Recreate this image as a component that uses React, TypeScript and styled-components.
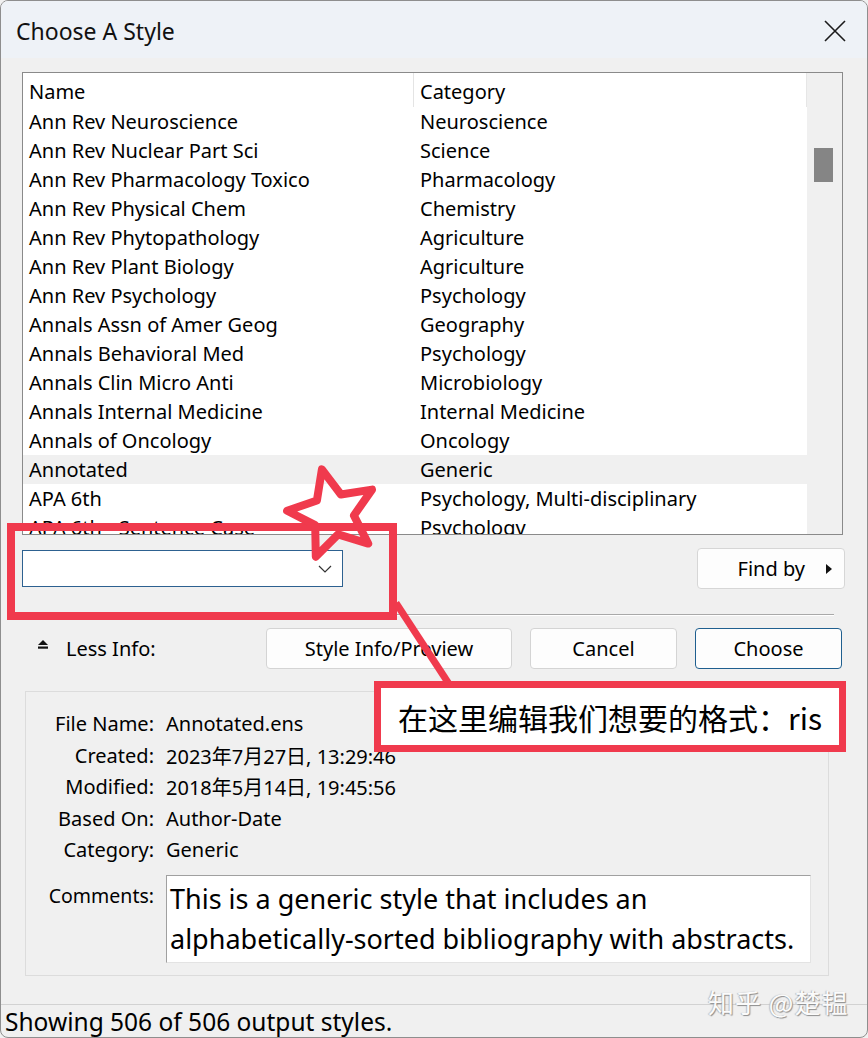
import styled, { createGlobalStyle } from "styled-components";

const GlobalStyle = createGlobalStyle`
    html, body {
        margin: 0;
        padding: 0;
        background: #f0f0f0;
    }

    body {
        font-family: "Noto Sans", "Noto Sans CJK SC", sans-serif;
        color: #000;
    }
`;

const styles: Array<{ name: string, category: string }> = [
    {name: "Ann Rev Neuroscience", category: "Neuroscience"},
    {name: "Ann Rev Nuclear Part Sci", category: "Science"},
    {name: "Ann Rev Pharmacology Toxico", category: "Pharmacology"},
    {name: "Ann Rev Physical Chem", category: "Chemistry"},
    {name: "Ann Rev Phytopathology", category: "Agriculture"},
    {name: "Ann Rev Plant Biology", category: "Agriculture"},
    {name: "Ann Rev Psychology", category: "Psychology"},
    {name: "Annals Assn of Amer Geog", category: "Geography"},
    {name: "Annals Behavioral Med", category: "Psychology"},
    {name: "Annals Clin Micro Anti", category: "Microbiology"},
    {name: "Annals Internal Medicine", category: "Internal Medicine"},
    {name: "Annals of Oncology", category: "Oncology"},
    {name: "Annotated", category: "Generic"},
    {name: "APA 6th", category: "Psychology, Multi-disciplinary"},
    {name: "APA 6th - Sentence Case", category: "Psychology"},
];

const details: Array<{ label: string, value: string }> = [
    {label: "File Name:", value: "Annotated.ens"},
    {label: "Created:", value: "2023年7月27日, 13:29:46"},
    {label: "Modified:", value: "2018年5月14日, 19:45:56"},
    {label: "Based On:", value: "Author-Date"},
    {label: "Category:", value: "Generic"},
];

const SELECTED = "Annotated";

export default function App() {
    return <Window>
        <GlobalStyle/>
        <TitleBar>
            <Title>Choose A Style</Title>
            <CloseIcon width="24" height="24" viewBox="0 0 24 24">
                <path d="M2 2 L22 22 M22 2 L2 22" stroke="#1b1b1b" strokeWidth="1.6" fill="none"/>
            </CloseIcon>
        </TitleBar>

        <Body>
            <ListBox>
                <Table>
                    <HeaderRow>
                        <HeaderCell divider>Name</HeaderCell>
                        <HeaderCell>Category</HeaderCell>
                    </HeaderRow>
                    {styles.map((s) => (
                        <Row key={s.name} selected={s.name === SELECTED}>
                            <Cell wide>{s.name}</Cell>
                            <Cell>{s.category}</Cell>
                        </Row>
                    ))}
                </Table>
                <ScrollTrack>
                    <ScrollThumb/>
                </ScrollTrack>
            </ListBox>

            <FindRow>
                <Combo>
                    <svg width="14" height="8" viewBox="0 0 14 8">
                        <path d="M1 1 L7 7 L13 1" stroke="#333" strokeWidth="1.2" fill="none"/>
                    </svg>
                </Combo>
                <FindButton>
                    Find by
                    <svg width="6" height="10" viewBox="0 0 6 10">
                        <path d="M0 0 L6 5 L0 10 Z" fill="#111"/>
                    </svg>
                </FindButton>
            </FindRow>

            <Separator/>

            <ButtonRow>
                <LessInfo>
                    <svg width="12" height="11" viewBox="0 0 12 11">
                        <path d="M1 6 L6 1 L11 6 Z" fill="#111"/>
                        <rect x="1" y="7.5" width="10" height="2.2" fill="#111"/>
                    </svg>
                    Less Info:
                </LessInfo>
                <Button width={246}>Style Info/Preview</Button>
                <Button width={147}>Cancel</Button>
                <Button width={147} primary>Choose</Button>
            </ButtonRow>

            <InfoPanel>
                {details.map((d) => (
                    <DetailRow key={d.label}>
                        <DetailLabel>{d.label}</DetailLabel>
                        <DetailValue>{d.value}</DetailValue>
                    </DetailRow>
                ))}
                <CommentRow>
                    <CommentLabel>Comments:</CommentLabel>
                    <CommentBox>
                        This is a generic style that includes an<br/>
                        alphabetically-sorted bibliography with abstracts.
                    </CommentBox>
                </CommentRow>
            </InfoPanel>
        </Body>

        <StatusBar>Showing 506 of 506 output styles.</StatusBar>

        <Markup width="868" height="1038" viewBox="0 0 868 1038">
            <rect x="11" y="527" width="382" height="89" fill="none" stroke="#f03a4d" strokeWidth="8"/>
            <polygon
                points={starPoints(333, 514, 46, 21, -14)}
                fill="none" stroke="#f03a4d" strokeWidth="8" strokeLinejoin="round"/>
            <line x1="396" y1="603" x2="449" y2="684" stroke="#f03a4d" strokeWidth="7"/>
        </Markup>

        <Caption>在这里编辑我们想要的格式：ris</Caption>
        <Watermark>知乎 @楚韫</Watermark>
    </Window>;
}

function starPoints(cx: number, cy: number, r: number, ir: number, rot: number) {
    const pts: string[] = [];
    for (let i = 0; i < 10; i++) {
        const a = ((rot + i * 36) * Math.PI) / 180;
        const rad = i % 2 === 0 ? r : ir;
        pts.push(`${(cx + rad * Math.sin(a)).toFixed(1)},${(cy - rad * Math.cos(a)).toFixed(1)}`);
    }
    return pts.join(" ");
}

const Window = styled.div`
    position: relative;
    width: 868px;
    height: 1038px;
    box-sizing: border-box;
    border: 1px solid #8e8e8e;
    border-radius: 8px;
    overflow: hidden;
    background: #f0f0f0;
    display: flex;
    flex-direction: column;
`;

const TitleBar = styled.div`
    height: 57px;
    flex: none;
    background: #eef2f7;
    display: flex;
    align-items: center;
    justify-content: space-between;
    padding: 0 20px 0 15px;
`;

const Title = styled.div`
    font-size: 23px;
    color: #111;
    margin-top: 2px;
`;

const CloseIcon = styled.svg`
    margin-top: 3px;
`;

const Body = styled.div`
    flex: 1;
    display: flex;
    flex-direction: column;
    padding: 14px 24px 0 21px;
`;

const ListBox = styled.div`
    height: 463px;
    box-sizing: border-box;
    border: 1px solid #8a8a8a;
    display: flex;
    background: #fff;
    overflow: hidden;
`;

const Table = styled.div`
    flex: 1;
    display: flex;
    flex-direction: column;
    overflow: hidden;
`;

const HeaderRow = styled.div`
    height: 34px;
    flex: none;
    display: flex;
    border-right: 1px solid #e6e6e6;
`;

const HeaderCell = styled.div<{ divider?: boolean }>`
    width: ${(p) => p.divider ? "391px" : "auto"};
    flex: ${(p) => p.divider ? "none" : "1"};
    box-sizing: border-box;
    border-right: ${(p) => p.divider ? "1px solid #e4e4e4" : "none"};
    padding: 4px 6px 0;
    font-size: 20px;
    line-height: 30px;
`;

const Row = styled.div<{ selected?: boolean }>`
    height: 29px;
    flex: none;
    display: flex;
    align-items: center;
    background: ${(p) => p.selected ? "#f0f0f0" : "#fff"};
`;

const Cell = styled.div<{ wide?: boolean }>`
    width: ${(p) => p.wide ? "391px" : "auto"};
    flex: ${(p) => p.wide ? "none" : "1"};
    box-sizing: border-box;
    padding-left: 6px;
    font-size: 20px;
    white-space: nowrap;
`;

const ScrollTrack = styled.div`
    width: 35px;
    flex: none;
    background: #f0f0f0;
    padding: 75px 0 0 7px;
    box-sizing: border-box;
`;

const ScrollThumb = styled.div`
    width: 19px;
    height: 34px;
    background: #858585;
`;

const FindRow = styled.div`
    margin-top: 13px;
    height: 41px;
    display: flex;
    align-items: center;
    justify-content: space-between;
    margin-right: -2px;
`;

const Combo = styled.div`
    width: 321px;
    height: 37px;
    box-sizing: border-box;
    border: 1px solid #2d6190;
    background: #fff;
    display: flex;
    align-items: center;
    justify-content: flex-end;
    padding-right: 10px;
`;

const FindButton = styled.div`
    width: 148px;
    height: 41px;
    box-sizing: border-box;
    border: 1px solid #d6d6d6;
    border-radius: 4px;
    background: #fdfdfd;
    display: flex;
    align-items: center;
    justify-content: flex-end;
    gap: 21px;
    padding-right: 12px;
    font-size: 20px;
`;

const Separator = styled.div`
    margin: 25px 9px 0 1px;
    height: 1px;
    background: #a9a9a9;
    border-bottom: 1px solid #fff;
`;

const ButtonRow = styled.div`
    margin-top: 12px;
    height: 41px;
    display: flex;
    align-items: center;
`;

const LessInfo = styled.div`
    width: 244px;
    flex: none;
    display: flex;
    align-items: center;
    gap: 17px;
    padding-left: 15px;
    font-size: 20px;
    box-sizing: border-box;

    svg {
        margin-top: -8px;
    }
`;

const Button = styled.div<{ width: number, primary?: boolean }>`
    width: ${(p) => p.width}px;
    flex: none;
    height: 41px;
    box-sizing: border-box;
    margin-right: 18px;
    border: 1px solid ${(p) => p.primary ? "#1f5f8f" : "#d4d4d4"};
    border-radius: 4px;
    background: #fdfdfd;
    display: flex;
    align-items: center;
    justify-content: center;
    font-size: 20px;

    &:last-child {
        margin-right: 0;
    }
`;

const InfoPanel = styled.div`
    margin: 22px 14px 0 3px;
    height: 285px;
    box-sizing: border-box;
    border: 1px solid #dcdcdc;
    padding: 16px 17px 0 0;
    display: flex;
    flex-direction: column;
`;

const DetailRow = styled.div`
    height: 31.5px;
    display: flex;
    align-items: center;
    font-size: 20px;
`;

const DetailLabel = styled.div`
    width: 128px;
    text-align: right;
    margin-right: 12px;
    white-space: nowrap;
`;

const DetailValue = styled.div`
    white-space: nowrap;
`;

const CommentRow = styled.div`
    margin-top: 9px;
    display: flex;
`;

const CommentLabel = styled.div`
    width: 128px;
    text-align: right;
    margin-right: 12px;
    padding-top: 7px;
    font-size: 19.5px;
    white-space: nowrap;
`;

const CommentBox = styled.div`
    flex: 1;
    height: 88px;
    box-sizing: border-box;
    border: 1px solid #a0a0a0;
    border-right-color: #e3e3e3;
    border-bottom-color: #e3e3e3;
    background: #fff;
    padding: 3px 4px 0 3px;
    font-size: 27px;
    line-height: 40px;
    white-space: nowrap;
    overflow: hidden;
`;

const StatusBar = styled.div`
    flex: none;
    height: 32px;
    border-top: 1px solid #d2d2d2;
    padding-left: 4px;
    font-size: 24.5px;
    line-height: 34px;
    white-space: nowrap;
`;

const Markup = styled.svg`
    position: absolute;
    left: -1px;
    top: -1px;
    pointer-events: none;
`;

const Caption = styled.div`
    position: absolute;
    left: 373px;
    top: 680px;
    width: 472px;
    height: 71px;
    box-sizing: border-box;
    border: 7px solid #f03a4d;
    background: #fff;
    padding-left: 17px;
    display: flex;
    align-items: center;
    font-family: "Noto Sans CJK SC", sans-serif;
    font-size: 30px;
    white-space: nowrap;
`;

const Watermark = styled.div`
    position: absolute;
    left: 707px;
    top: 982px;
    font-family: "Noto Sans CJK SC", sans-serif;
    font-size: 26px;
    color: #fbfbfb;
    text-shadow: 1px 1px 1px #8d8d8d, -1px 0 1px #bbb;
    letter-spacing: 1px;
`;
